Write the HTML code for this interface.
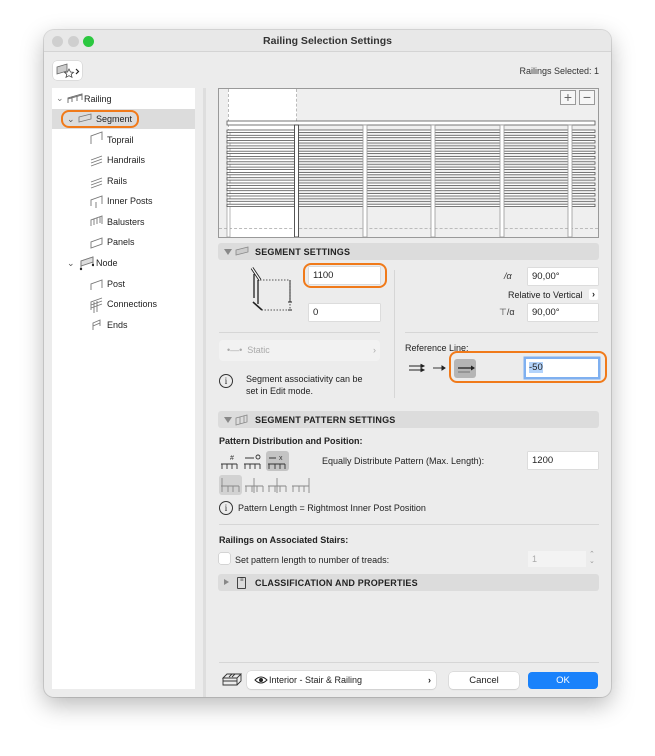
<!DOCTYPE html>
<html><head><meta charset="utf-8"><style>
*{box-sizing:border-box;margin:0;padding:0}
body{width:655px;height:756px;background:#fff;font-family:"Liberation Sans",sans-serif;font-size:9px;color:#222;position:relative;overflow:hidden}
.a{position:absolute}
.win{left:44px;top:30px;width:567px;height:667px;background:#ececec;border-radius:10px;box-shadow:0 8px 24px rgba(0,0,0,.28),0 0 0 1px rgba(0,0,0,.12);overflow:hidden}
.inp{position:absolute;background:#fff;height:17px;font-size:9.5px;padding:3px 4px;box-shadow:0 0 0 .5px #ccc}
.hdr{position:absolute;left:218px;width:381px;height:17px;background:#dcdcdc;border-radius:3px;font-weight:bold;font-size:9px;padding:4px 0 0 37px;letter-spacing:.2px}
.tri{position:absolute;left:6px;top:6px;width:0;height:0;border-left:4px solid transparent;border-right:4px solid transparent;border-top:6px solid #888}
.tree div{position:absolute;font-size:9px}
.ring{position:absolute;border:2px solid #f07a1a;border-radius:8px}
.sep{position:absolute;height:1px;background:#d6d6d6}
</style></head><body>
<div class="a win">
  <div class="a" style="left:0;top:0;width:567px;height:22px;border-bottom:1px solid #d4d4d4;background:#e8e8e8"></div>
  <div class="a" style="left:8px;top:6px;width:11px;height:11px;border-radius:50%;background:#cfcfcf"></div>
  <div class="a" style="left:24px;top:6px;width:11px;height:11px;border-radius:50%;background:#cfcfcf"></div>
  <div class="a" style="left:39px;top:6px;width:11px;height:11px;border-radius:50%;background:#2cc840"></div>
  <div class="a" style="left:0;top:5px;width:567px;text-align:center;font-weight:bold;font-size:10.5px;color:#333">Railing Selection Settings</div>
</div>
<div class="a" style="left:53px;top:61px;width:29px;height:19px;background:#fff;border-radius:4px;box-shadow:0 0 0 .5px #ccc"></div>
<svg class="a" style="left:55px;top:62px" width="28" height="17"><path d="M2 5 L12 2 L12 9 L2 12Z" fill="#ccc" stroke="#666" stroke-width=".8"/><path d="M14 7 l1.5 3 3 .3 -2.3 2 .8 3 -3-1.6 -3 1.6 .8-3 -2.3-2 3-.3z" fill="#fff" stroke="#444" stroke-width=".8"/><path d="M21 7 l2.5 2.5 -2.5 2.5" fill="none" stroke="#222" stroke-width="1.2"/></svg>
<div class="a" style="right:56px;top:66px;font-size:9px;color:#333">Railings Selected: 1</div>
<div class="a" style="left:52px;top:88px;width:143px;height:601px;background:#fff"></div>
<div class="a" style="left:203px;top:88px;width:3px;height:609px;background:#dedede"></div>
<div class="a" style="left:52px;top:109px;width:143px;height:20px;background:#dcdcdc"></div>
<div class="ring" style="left:61px;top:110px;width:78px;height:18px"></div>
<div class="tree">
<div style="left:56px;top:93px;color:#777">⌄</div><div style="left:84px;top:94px">Railing</div>
<div style="left:67px;top:114px;color:#555">⌄</div>
<div style="left:96px;top:114px">Segment</div>
<div style="left:107px;top:135px">Toprail</div>
<div style="left:107px;top:155px">Handrails</div>
<div style="left:107px;top:176px">Rails</div>
<div style="left:107px;top:196px">Inner Posts</div>
<div style="left:107px;top:217px">Balusters</div>
<div style="left:107px;top:237px">Panels</div>
<div style="left:67px;top:258px;color:#555">⌄</div>
<div style="left:96px;top:258px">Node</div>
<div style="left:107px;top:279px">Post</div>
<div style="left:107px;top:299px">Connections</div>
<div style="left:107px;top:320px">Ends</div>
</div>
<svg class="a" style="left:67px;top:93px" width="16" height="12" fill="none" stroke="#666" stroke-width=".9"><path d="M1 10 V5 L15 1 V7 M5 9 V4 M10 8 V3 M1 6 L15 2"/></svg>
<svg class="a" style="left:78px;top:113px" width="14" height="10"><path d="M1 4 L13 1 L13 6 L1 9Z" fill="#ddd" stroke="#777" stroke-width=".8"/></svg>
<svg class="a" style="left:78px;top:255px" width="16" height="16" fill="none" stroke="#777" stroke-width=".9"><path d="M3 13 V6 L15 2 V9"/><path d="M3 6 L15 2 V7 L3 11Z" fill="#ddd"/><circle cx="3" cy="14" r="1.2" fill="#222" stroke="none"/><circle cx="15" cy="10" r="1.2" fill="#222" stroke="none"/></svg>
<svg class="a" style="left:88px;top:130px" width="18" height="200" fill="none" stroke="#777" stroke-width=".9">
<path d="M3 14 L3 6 L14 2 L14 10"/>
<path d="M3 30 L14 26 M3 33 L14 29 M3 36 L14 32"/>
<path d="M3 52 L14 48 M3 55 L14 51 M3 58 L14 54"/>
<path d="M3 76 L3 70 L14 66 L14 74 M8 72 L8 78"/>
<path d="M3 96 L3 90 L14 86 L14 94 M6 95 V89 M9 94 V88 M12 93 V87"/>
<path d="M3 118 L3 112 L14 108 L14 114 Z"/>
<path d="M3 160 L3 154 L14 150 L14 158"/>
<path d="M3 180 L3 172 L14 168 M3 175 L14 171 M3 178 L14 174 M6 183 V172 M9 182 V171"/>
<path d="M5 200 L5 193 L12 190 L12 196 M5 196 L12 193"/>
</svg>
<div class="a" style="left:218px;top:88px;width:381px;height:150px;background:#efefef;border:1px solid #999"></div>
<div class="a" style="left:228px;top:89px;width:69px;height:148px;background:#fff"></div>
<div class="a" style="left:228px;top:89px;height:148px;border-left:1px dashed #bbb"></div>
<div class="a" style="left:296px;top:89px;height:42px;border-left:1px dashed #bbb"></div>
<div class="a" style="left:219px;top:228px;width:379px;border-top:1px dashed #bbb"></div>
<div class="a" style="left:560px;top:90px;width:16px;height:15px;border:1px solid #999;background:#f6f6f6;text-align:center;font-size:14px;line-height:13px;color:#666">+</div>
<div class="a" style="left:579px;top:90px;width:16px;height:15px;border:1px solid #999;background:#f6f6f6;text-align:center;font-size:14px;line-height:12px;color:#666">−</div>
<svg class="a" style="left:219px;top:89px" width="380" height="148">
<rect x="8" y="42" width="3" height="106" fill="#fff" stroke="#999" stroke-width=".7"/>
<rect x="8" y="32" width="368" height="4" fill="#fff" stroke="#555" stroke-width=".8"/>
<g stroke="#555" stroke-width=".8" fill="#fff">
<rect x="8" y="41" width="368" height="2.4"/><rect x="8" y="46.3" width="368" height="2.4"/><rect x="8" y="51.6" width="368" height="2.4"/><rect x="8" y="56.9" width="368" height="2.4"/><rect x="8" y="62.2" width="368" height="2.4"/><rect x="8" y="67.5" width="368" height="2.4"/><rect x="8" y="72.8" width="368" height="2.4"/><rect x="8" y="78.1" width="368" height="2.4"/><rect x="8" y="83.4" width="368" height="2.4"/><rect x="8" y="88.7" width="368" height="2.4"/><rect x="8" y="94" width="368" height="2.4"/><rect x="8" y="99.3" width="368" height="2.4"/><rect x="8" y="104.6" width="368" height="2.4"/><rect x="8" y="109.9" width="368" height="2.4"/><rect x="8" y="115.2" width="368" height="2.4"/>
</g>
<g fill="#fff" stroke="#999" stroke-width=".8">
<rect x="144" y="36" width="4" height="112"/><rect x="212" y="36" width="4" height="112"/><rect x="281" y="36" width="4" height="112"/><rect x="349" y="36" width="4" height="112"/>
</g>
<rect x="75.5" y="36" width="4" height="112" fill="#fff" stroke="#444" stroke-width=".9"/>
</svg>
<div class="hdr" style="top:243px"><div class="tri"></div>SEGMENT SETTINGS</div>
<svg class="a" style="left:235px;top:246px" width="14" height="10"><path d="M1 4 L13 1 L13 6 L1 9Z" fill="#ccc" stroke="#888" stroke-width=".8"/></svg>
<svg class="a" style="left:250px;top:266px" width="45" height="50" fill="none" stroke="#222">
<path d="M2 2 L10 14" stroke-width="3"/><path d="M2 2 L10 14" stroke="#fff" stroke-width="1.2"/>
<path d="M4 8 V32 M8 14 V38" stroke-width="1.3"/><path d="M3 36 L12 44" stroke-width="1.6"/>
<path d="M10 14 H40 V44 H12" stroke-dasharray="1.5 1.5" stroke-width=".8"/><path d="M40 14 V36 M38 36 H42 M38 44 H42" stroke-width=".9"/>
</svg>
<div class="ring" style="left:303px;top:263px;width:84px;height:25px"></div>
<div class="inp" style="left:309px;top:267px;width:71px">1100</div>
<div class="inp" style="left:309px;top:304px;width:71px">0</div>
<div class="sep" style="left:219px;top:332px;width:161px"></div>
<div class="a" style="left:394px;top:270px;width:1px;height:128px;background:#d6d6d6"></div>
<div class="a" style="left:504px;top:271px;font-style:italic;font-size:9px;color:#333">/α</div>
<div class="inp" style="left:528px;top:268px;width:70px">90,00°</div>
<div class="a" style="left:508px;top:290px;font-size:9px">Relative to Vertical</div>
<div class="a" style="left:589px;top:289px;width:9px;height:11px;background:#fff;border-radius:2px;font-size:9px;font-weight:bold;text-align:center">›</div>
<div class="a" style="left:499px;top:307px;font-size:9px;color:#333">⊤/α</div>
<div class="inp" style="left:528px;top:304px;width:70px">90,00°</div>
<div class="sep" style="left:405px;top:332px;width:193px"></div>
<div class="a" style="left:219px;top:340px;width:161px;height:21px;background:#f2f2f2;border-radius:4px;color:#aaa;font-size:9px;padding:5px 0 0 8px">•—• &nbsp;Static<span style="position:absolute;right:4px">›</span></div>
<div class="a" style="left:219px;top:374px;width:14px;height:14px;border:1.2px solid #333;border-radius:50%;font-size:9px;text-align:center;line-height:12px;font-family:'Liberation Serif',serif">i</div>
<div class="a" style="left:246px;top:373px;font-size:9px;line-height:12px">Segment associativity can be<br>set in Edit mode.</div>
<div class="a" style="left:405px;top:343px;font-size:9px">Reference Line:</div>
<svg class="a" style="left:408px;top:361px" width="70" height="16" stroke="#222" fill="#222">
<path d="M1 5 H13 M1 9 H13" stroke-width="1.1"/><path d="M13 3.5 L16 5 L13 6.5Z M13 7.5 L16 9 L13 10.5Z"/>
<path d="M25 7 H34" stroke-width=".9"/><path d="M34 5 L37 7 L34 9Z"/>
</svg>
<div class="ring" style="left:449px;top:351px;width:158px;height:32px"></div>
<div class="a" style="left:454px;top:359px;width:22px;height:19px;background:#b5b5b5;border-radius:3px"></div>
<svg class="a" style="left:456px;top:362px" width="20" height="14"><path d="M2 6 H16" stroke="#222" stroke-width="1.3"/><path d="M15 3.5 L19 6 L15 8.5Z" fill="#222"/><path d="M2 10 H14" stroke="#666" stroke-width=".8"/></svg>
<div class="inp" style="left:526px;top:359px;width:72px;height:18px;box-shadow:0 0 0 2.5px #7fb0f0;padding-left:3px"><span style="background:#b3d3fb">-50</span></div>
<div class="hdr" style="top:411px"><div class="tri"></div>SEGMENT PATTERN SETTINGS</div>
<svg class="a" style="left:235px;top:414px" width="14" height="12" fill="none" stroke="#888" stroke-width=".8"><path d="M1 4 L12 1 V8 L1 11Z M5 3 V10 M9 2 V9"/></svg>
<div class="a" style="left:219px;top:436px;font-weight:bold;font-size:9px">Pattern Distribution and Position:</div>
<div class="a" style="left:266px;top:451px;width:23px;height:20px;background:#c4c4c4;border-radius:3px"></div>
<div class="a" style="left:219px;top:475px;width:23px;height:20px;background:#d2d2d2;border-radius:3px"></div>
<svg class="a" style="left:219px;top:452px" width="100" height="45" fill="none" stroke="#333" stroke-width=".9">
<path d="M2 12 H18 M3 12 V17 M8 12 V17 M13 12 V17 M18 12 V17"/><text x="11" y="8" font-size="7" fill="#333" stroke="none">#</text>
<path d="M25 12 H41 M26 12 V17 M31 12 V17 M36 12 V17 M41 12 V17 M26 6 H35"/><circle cx="39" cy="5" r="2"/>
<path d="M49 12 H66 M50 12 V17 M56 12 V17 M61 12 V17 M66 12 V17 M50 6 H57"/><text x="60" y="8" font-size="7" fill="#333" stroke="none">x</text>
<g stroke="#888"><path d="M2 34 H20 M3 34 V40 M9 34 V40 M14 34 V40 M20 34 V40 M3 26 V34"/>
<path d="M26 34 H44 M27 34 V40 M33 34 V40 M38 34 V40 M44 34 V40 M35 26 V41"/>
<path d="M49 34 H67 M50 34 V40 M56 34 V40 M61 34 V40 M67 34 V40 M58 26 V41"/>
<path d="M73 34 H90 M74 34 V40 M80 34 V40 M85 34 V40 M90 34 V40 M90 26 V41"/></g>
</svg>
<div class="a" style="left:322px;top:456px;font-size:9px">Equally Distribute Pattern (Max. Length):</div>
<div class="inp" style="left:528px;top:452px;width:70px">1200</div>
<div class="a" style="left:219px;top:501px;width:14px;height:14px;border:1.2px solid #333;border-radius:50%;font-size:9px;text-align:center;line-height:12px;font-family:'Liberation Serif',serif">i</div>
<div class="a" style="left:238px;top:503px;font-size:9px">Pattern Length = Rightmost Inner Post Position</div>
<div class="sep" style="left:219px;top:524px;width:380px"></div>
<div class="a" style="left:219px;top:535px;font-weight:bold;font-size:9px">Railings on Associated Stairs:</div>
<div class="a" style="left:219px;top:553px;width:11px;height:11px;background:#fff;border-radius:2px;box-shadow:0 0 0 .5px #bbb"></div>
<div class="a" style="left:235px;top:555px;font-size:9px">Set pattern length to number of treads:</div>
<div class="a" style="left:528px;top:551px;width:58px;height:16px;background:#f3f3f3;color:#aaa;font-size:9px;padding:3px 4px">1</div>
<div class="a" style="left:589px;top:551px;font-size:7px;color:#999;line-height:7px">⌃<br>⌄</div>
<div class="hdr" style="top:574px"><div class="a" style="left:6px;top:5px;border-top:3.5px solid transparent;border-bottom:3.5px solid transparent;border-left:5px solid #888"></div>CLASSIFICATION AND PROPERTIES</div>
<div class="a" style="left:237px;top:577px;width:9px;height:12px;border:1px solid #444;border-radius:1px;font-size:6px;line-height:3px;padding:1px 0 0 2px">≡</div>
<div class="sep" style="left:219px;top:662px;width:380px"></div>
<svg class="a" style="left:221px;top:673px" width="22" height="15" fill="none" stroke="#333" stroke-width=".9"><path d="M2 5 L6 1 H20 L16 5Z M2 5 V12 H16 V5 M16 12 L20 8 V1 M2 8 H16 M8 4 L11 1 M11 4 L14 1"/></svg>
<div class="a" style="left:247px;top:671px;width:189px;height:18px;background:#fff;border-radius:4px;box-shadow:0 0 0 .5px #ccc,0 1px 1px rgba(0,0,0,.1);font-size:9px;padding:4px 0 0 22px">Interior - Stair &amp; Railing<span style="position:absolute;right:5px;font-weight:bold">›</span></div>
<svg class="a" style="left:254px;top:675px" width="14" height="10"><path d="M1 5 Q7 -1 13 5 Q7 11 1 5Z" fill="none" stroke="#222" stroke-width="1"/><circle cx="7" cy="5" r="2" fill="#222"/></svg>
<div class="a" style="left:449px;top:672px;width:70px;height:17px;background:#fff;border-radius:4px;box-shadow:0 0 0 .5px #ccc,0 1px 1px rgba(0,0,0,.1);text-align:center;font-size:9.5px;padding-top:3px">Cancel</div>
<div class="a" style="left:528px;top:672px;width:70px;height:17px;background:#1a82fb;border-radius:4px;color:#fff;text-align:center;font-size:9.5px;padding-top:3px">OK</div>
</body></html>
